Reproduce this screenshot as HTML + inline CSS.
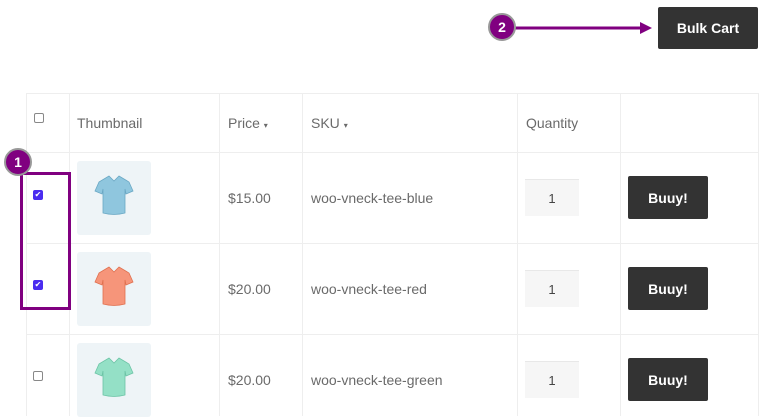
<!DOCTYPE html>
<html><head><meta charset="utf-8"><style>
*{margin:0;padding:0;box-sizing:border-box}
body{width:768px;height:416px;overflow:hidden;background:#fff;position:relative;font-family:"Liberation Sans",sans-serif;color:#6a6a6a;font-size:14px}
.a{position:absolute}
.hl{position:absolute;height:1px;background:#eee}
.vl{position:absolute;width:1px;background:#eee}
.btn{position:absolute;background:#333;color:#fff;font-weight:bold;font-size:14px;display:flex;align-items:center;justify-content:center;border-radius:2px}
.qty{position:absolute;width:54px;height:37px;background:#f6f6f6;border-top:1px solid #e8e8e8;display:flex;align-items:center;justify-content:center;color:#444;font-size:13px}
.th{position:absolute;left:77px;width:74px;height:74px;background:#eef4f7;border-radius:3px}
.cb{position:absolute;width:10px;height:10px;border:1px solid #888;border-radius:2px;background:#fff}
.cbc{position:absolute;width:10px;height:10px;background:#4a2cf0;border-radius:2px;color:#fff;font-size:8px;line-height:10px;text-align:center}
.t{position:absolute;line-height:16px}
.circ{position:absolute;width:28px;height:28px;border-radius:50%;background:#800080;border:2px solid #999;color:#fff;font-weight:bold;font-size:14px;display:flex;align-items:center;justify-content:center}
</style></head><body>
<div class="btn" style="left:658px;top:7px;width:100px;height:42px">Bulk Cart</div>
<svg class="a" style="left:510px;top:18px" width="150" height="20"><line x1="4" y1="10" x2="132" y2="10" stroke="#800080" stroke-width="3"/><polygon points="130,4 142,10 130,16" fill="#800080"/></svg>
<div class="circ" style="left:488px;top:13px">2</div>

<div class="hl" style="left:26px;top:93px;width:732px"></div>
<div class="hl" style="left:26px;top:152px;width:732px"></div>
<div class="hl" style="left:26px;top:243px;width:732px"></div>
<div class="hl" style="left:26px;top:334px;width:732px"></div>
<div class="vl" style="left:26px;top:93px;height:323px"></div>
<div class="vl" style="left:69px;top:93px;height:323px"></div>
<div class="vl" style="left:219px;top:93px;height:323px"></div>
<div class="vl" style="left:302px;top:93px;height:323px"></div>
<div class="vl" style="left:517px;top:93px;height:323px"></div>
<div class="vl" style="left:620px;top:93px;height:323px"></div>
<div class="vl" style="left:758px;top:93px;height:323px"></div>

<div class="cb" style="left:34px;top:113px"></div>
<div class="t" style="left:77px;top:115px">Thumbnail</div>
<div class="t" style="left:228px;top:115px">Price <span style="font-size:8px">▾</span></div>
<div class="t" style="left:311px;top:115px">SKU <span style="font-size:8px">▾</span></div>
<div class="t" style="left:526px;top:115px">Quantity</div>

<div class="cbc" style="left:33px;top:190px">✔</div>
<div class="cbc" style="left:33px;top:280px">✔</div>
<div class="cb" style="left:33px;top:371px"></div>

<div class="th" style="top:161px"></div>
<div class="th" style="top:252px"></div>
<div class="th" style="top:343px"></div>
<svg class="a" style="left:77px;top:161px" width="74" height="256">
<g><path d="M22,21 L32,15 L37,20 L42,15 L52,21 L56,30 L49,33 L48,28 L48,52 Q37,55 26,52 L26,28 L25,33 L18,30 Z" fill="#8fc6de" stroke="#6aa8c4" stroke-width="0.8"/></g>
<g transform="translate(0,91)"><path d="M22,21 L32,15 L37,20 L42,15 L52,21 L56,30 L49,33 L48,28 L48,52 Q37,55 26,52 L26,28 L25,33 L18,30 Z" fill="#f6957a" stroke="#e0704f" stroke-width="0.8"/></g>
<g transform="translate(0,182)"><path d="M22,21 L32,15 L37,20 L42,15 L52,21 L56,30 L49,33 L48,28 L48,52 Q37,55 26,52 L26,28 L25,33 L18,30 Z" fill="#94e0c6" stroke="#6cc4a6" stroke-width="0.8"/></g>
</svg>

<div class="t" style="left:228px;top:190px">$15.00</div>
<div class="t" style="left:228px;top:281px">$20.00</div>
<div class="t" style="left:228px;top:372px">$20.00</div>
<div class="t" style="left:311px;top:190px">woo-vneck-tee-blue</div>
<div class="t" style="left:311px;top:281px">woo-vneck-tee-red</div>
<div class="t" style="left:311px;top:372px">woo-vneck-tee-green</div>

<div class="qty" style="left:525px;top:179px">1</div>
<div class="qty" style="left:525px;top:270px">1</div>
<div class="qty" style="left:525px;top:361px">1</div>

<div class="btn" style="left:628px;top:176px;width:80px;height:43px">Buuy!</div>
<div class="btn" style="left:628px;top:267px;width:80px;height:43px">Buuy!</div>
<div class="btn" style="left:628px;top:358px;width:80px;height:43px">Buuy!</div>

<div class="a" style="left:20px;top:172px;width:51px;height:138px;border:3px solid #800080"></div>
<div class="circ" style="left:4px;top:148px">1</div>
</body></html>
